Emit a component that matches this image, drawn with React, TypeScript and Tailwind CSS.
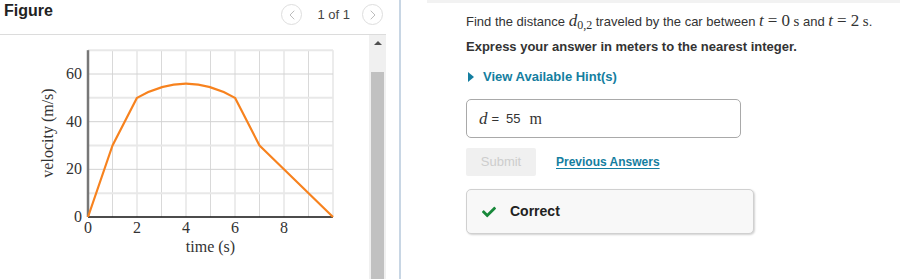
import { ChevronLeft, ChevronRight } from "lucide-react";
import { FaCheck } from "react-icons/fa";

const X0 = 88;
const SX = 24.5;
const Y0 = 182;
const SY = 2.383;
const px = (t: number) => X0 + t * SX;
const py = (v: number) => Y0 - v * SY;

function Chart() {
  const vLines = [1, 2, 3, 4, 5, 6, 7, 8, 9, 10];
  const hLines = [10, 20, 30, 40, 50, 60, 70];
  const curve = `M ${px(0)} ${py(0)} L ${px(1)} ${py(30)} L ${px(2)} ${py(50)} Q ${px(4)} ${py(62)} ${px(6)} ${py(50)} L ${px(7)} ${py(30)} L ${px(10)} ${py(0)}`;

  return (
    <svg width={369} height={244} className="block">
      {vLines.map((t) => (
        <line key={"v" + t} x1={px(t)} x2={px(t)} y1={py(70)} y2={Y0} stroke="#d9d9d9" strokeWidth={1} />
      ))}
      {hLines.map((v) => (
        <line
          key={"h" + v}
          x1={X0}
          x2={px(10)}
          y1={py(v)}
          y2={py(v)}
          stroke={v % 20 === 0 ? "#d2d2d2" : "#e8e8e8"}
          strokeWidth={v % 20 === 0 ? 1 : 2}
        />
      ))}
      <line x1={X0} x2={X0} y1={py(70)} y2={Y0} stroke="#777" strokeWidth={2.5} />
      <line x1={X0} x2={px(10)} y1={Y0} y2={Y0} stroke="#111" strokeWidth={1.5} />
      <path d={curve} fill="none" stroke="#f7821e" strokeWidth={2.2} strokeLinejoin="round" />

      <g fontFamily="'Liberation Serif', 'Times New Roman', serif" fontSize={16} fill="#333">
        {[0, 20, 40, 60].map((v) => (
          <text key={"yl" + v} x={82} y={py(v) + 5} textAnchor="end">
            {v}
          </text>
        ))}
        {[0, 2, 4, 6, 8].map((t) => (
          <text key={"xl" + t} x={px(t)} y={198} textAnchor="middle">
            {t}
          </text>
        ))}
        <text x={px(5)} y={217} textAnchor="middle" fontSize={16}>
          time (s)
        </text>
        <text transform="translate(53 98) rotate(-90)" textAnchor="middle" fontSize={16}>
          velocity (m/s)
        </text>
      </g>
    </svg>
  );
}

export default function App() {
  return (
    <div className="w-[900px] h-[279px] overflow-hidden bg-white flex font-['Liberation_Sans',Arial,sans-serif] text-[#333]">
      {/* figure panel */}
      <div className="w-[386px] flex flex-col">
        <div className="h-[35px] border-b border-[#dcdcdc] flex items-start justify-between">
          <div className="pl-[4px] pt-[1px] text-[16px] font-bold text-[#222] leading-[20px]">Figure</div>
          <div className="flex items-center pt-[4px] pr-[3px]">
            <div className="w-[21px] h-[21px] rounded-full border border-[#dedede] flex items-center justify-center">
              <ChevronLeft size={16} color="#bdbdbd" strokeWidth={1.5} />
            </div>
            <span className="ml-[15px] mr-[12px] text-[13px] text-[#444]">1 of 1</span>
            <div className="w-[21px] h-[21px] rounded-full border border-[#dedede] flex items-center justify-center">
              <ChevronRight size={16} color="#bdbdbd" strokeWidth={1.5} />
            </div>
          </div>
        </div>
        <div className="flex flex-1">
          <div className="w-[369px]">
            <Chart />
          </div>
          <div className="w-[17px] bg-[#f0f0f0] flex flex-col items-center">
            <div className="mt-[6px] w-0 h-0 border-l-[4px] border-r-[4px] border-b-[4px] border-l-transparent border-r-transparent border-b-[#505050]" />
            <div className="mt-[27px] w-[13px] flex-1 bg-[#c1c1c1]" />
          </div>
        </div>
      </div>

      <div className="w-[13px]" />
      <div className="w-[2px] bg-[#c8d6e4]" />

      {/* question panel */}
      <div className="flex-1 flex flex-col">
        <div className="h-[3px] ml-[26px] bg-[#f2f2f2]" />
        <div className="pl-[65px] pt-[9px] flex flex-col">
          <p className="text-[13px] leading-[18px] h-[18px] text-[#333] whitespace-nowrap">
            Find the distance{" "}
            <span className="font-['Liberation_Serif',serif] italic text-[17px] leading-[18px]">d</span>
            <span className="font-['Liberation_Serif',serif] text-[12px] leading-[10px] align-[-3px]">0,2</span> traveled by
            the car between{" "}
            <span className="font-['Liberation_Serif',serif] text-[17px] leading-[18px]">
              <i>t</i>
              <span className="mx-[4px]">=</span>0
            </span>{" "}
            <span className="font-['Liberation_Serif',serif] text-[15px]">s</span> and{" "}
            <span className="font-['Liberation_Serif',serif] text-[17px] leading-[18px]">
              <i>t</i>
              <span className="mx-[4px]">=</span>2
            </span>{" "}
            <span className="font-['Liberation_Serif',serif] text-[15px]">s</span>.
          </p>
          <p className="mt-[8px] text-[13px] leading-[18px] font-bold text-[#333]">
            Express your answer in meters to the nearest integer.
          </p>
          <div className="mt-[12px] flex items-center h-[18px] text-[13px] font-bold text-[#147ea0]">
            <span className="ml-[2px] w-0 h-0 border-t-[5px] border-b-[5px] border-l-[6px] border-t-transparent border-b-transparent border-l-[#147ea0]" />
            <span className="ml-[9px]">View Available Hint(s)</span>
          </div>

          <div className="mt-[13px] w-[275px] h-[39px] border border-[#a9a9a9] rounded-[5px] flex items-center pl-[12px]">
            <span className="font-['Liberation_Serif',serif] italic text-[17px] text-[#333]">d</span>
            <span className="ml-[4px] text-[13px] text-[#333]">=</span>
            <span className="ml-[7px] text-[13px] text-[#333]">55</span>
            <span className="ml-[9px] font-['Liberation_Serif',serif] text-[16px] text-[#333]">m</span>
          </div>

          <div className="mt-[10px] flex items-center">
            <div className="w-[70px] h-[28px] bg-[#f0f0f0] rounded-[2px] flex items-center justify-center text-[13px] text-[#cdcdcd]">
              Submit
            </div>
            <span className="ml-[20px] text-[12px] font-bold text-[#147ea0] underline underline-offset-2">
              Previous Answers
            </span>
          </div>

          <div className="mt-[13px] w-[288px] h-[45px] bg-[#f8f8f8] border border-[#d0d0d0] rounded-[5px] shadow-[1px_1px_2px_rgba(0,0,0,0.18)] flex items-center pl-[15px]">
            <FaCheck size={14} color="#18883a" />
            <span className="ml-[14px] text-[14px] font-bold text-[#222]">Correct</span>
          </div>
        </div>
      </div>
    </div>
  );
}
